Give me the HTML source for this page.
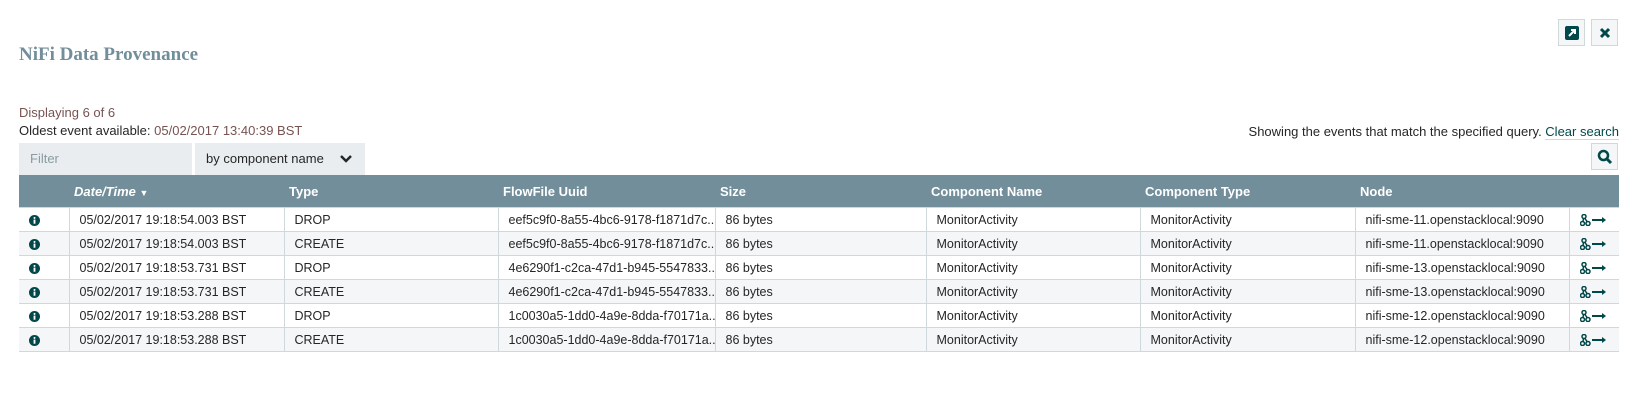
<!DOCTYPE html>
<html><head><style>
body{margin:0;width:1634px;height:401px;background:#fff;font-family:"Liberation Sans",sans-serif;font-size:13px;color:#262626;position:relative;overflow:hidden}
.a{position:absolute}
.btn{position:absolute;width:27px;height:27px;border:1px solid #cfd9dc;background:#f4f6f7;box-sizing:border-box;display:flex;align-items:center;justify-content:center}
table{position:absolute;left:19px;top:175px;width:1600px;border-collapse:collapse;table-layout:fixed}
th{background:#728e9b;color:#fff;font-weight:bold;text-align:left;height:32px;padding:0 0 0 5px;font-size:13px}
td{height:23px;border:1px solid #cfd9dc;padding:0 0 0 10px;white-space:nowrap;overflow:hidden;font-size:12.5px}
td svg{vertical-align:middle}
tr:nth-child(even) td{background:#f4f6f7}
td.i{border-left:none;padding-left:10px}
td.l{border-right:none;padding-left:10px}
</style></head><body>
<div class="a" style="left:19px;top:44px;font-family:'Liberation Serif',serif;font-weight:bold;font-size:19px;color:#728e9b">NiFi Data Provenance</div>
<div class="btn" style="left:1558px;top:19px"><svg width="14" height="14" viewBox="0 0 14 14"><rect x="0" y="0" width="14" height="14" rx="2" fill="#004849"/><path d="M4 10L10 4M6 4h4v4" stroke="#fff" stroke-width="2" fill="none"/></svg></div>
<div class="btn" style="left:1591px;top:19px"><svg width="12" height="12" viewBox="0 0 12 12"><path d="M2 2L10 10M10 2L2 10" stroke="#004849" stroke-width="3"/></svg></div>
<div class="a" style="left:19px;top:105px;color:#775351;font-size:13px">Displaying 6 of 6</div>
<div class="a" style="left:19px;top:123px;font-size:13px">Oldest event available: <span style="color:#775351">05/02/2017 13:40:39 BST</span></div>
<div class="a" style="right:15px;top:124px;font-size:13px">Showing the events that match the specified query. <span style="color:#004849;border-bottom:1px solid #cfd9dc">Clear search</span></div>
<div class="a" style="left:19px;top:143px;width:173px;height:32px;background:#e9edf0;color:#8a9ba3;line-height:32px;padding-left:11px;box-sizing:border-box">Filter</div>
<div class="a" style="left:195px;top:143px;width:170px;height:32px;background:#e9edf0;line-height:32px;padding-left:11px;box-sizing:border-box">by component name<svg class="a" style="left:145px;top:11px" width="12" height="10" viewBox="0 0 12 10"><path d="M1 2L6 7L11 2" stroke="#262626" stroke-width="2.5" fill="none"/></svg></div>
<div class="btn" style="left:1591px;top:143px"><svg width="16" height="16" viewBox="0 0 16 16"><circle cx="6.5" cy="6.5" r="4.5" stroke="#004849" stroke-width="2.5" fill="none"/><path d="M10 10L14 14" stroke="#004849" stroke-width="3"/></svg></div>
<table>
<colgroup><col style="width:50px"><col style="width:215px"><col style="width:214px"><col style="width:217px"><col style="width:211px"><col style="width:214px"><col style="width:215px"><col style="width:214px"><col style="width:50px"></colgroup>
<tr><th></th><th style="padding-left:5px"><i>Date/Time</i> <span style="font-size:9px">&#9660;</span></th><th>Type</th><th>FlowFile Uuid</th><th>Size</th><th>Component Name</th><th>Component Type</th><th>Node</th><th></th></tr>
</table>
<script>
var d=[["05/02/2017 19:18:54.003 BST","DROP","eef5c9f0-8a55-4bc6-9178-f1871d7c...","11"],["05/02/2017 19:18:54.003 BST","CREATE","eef5c9f0-8a55-4bc6-9178-f1871d7c...","11"],["05/02/2017 19:18:53.731 BST","DROP","4e6290f1-c2ca-47d1-b945-5547833...","13"],["05/02/2017 19:18:53.731 BST","CREATE","4e6290f1-c2ca-47d1-b945-5547833...","13"],["05/02/2017 19:18:53.288 BST","DROP","1c0030a5-1dd0-4a9e-8dda-f70171a...","12"],["05/02/2017 19:18:53.288 BST","CREATE","1c0030a5-1dd0-4a9e-8dda-f70171a...","12"]];
var info='<svg width="11" height="11" viewBox="0 0 12 12"><circle cx="6" cy="6" r="6" fill="#004849"/><rect x="5" y="5" width="2" height="4.5" fill="#fff"/><circle cx="6" cy="3.2" r="1.1" fill="#fff"/></svg>';
var lin='<svg width="28" height="12" viewBox="0 0 28 12"><g stroke="#004849" stroke-width="1.5" fill="none"><circle cx="4" cy="2.5" r="2"/><circle cx="2.5" cy="9.5" r="2"/><circle cx="8" cy="9.5" r="2"/><path d="M3.5 4.5L3 7.5M5 4.5L7 7.5"/></g><path d="M12 6h12" stroke="#004849" stroke-width="2"/><path d="M22 3L26 6L22 9z" fill="#004849"/></svg>';
var h='';d.forEach(function(r){h+='<tr><td class="i">'+info+'</td><td>'+r[0]+'</td><td>'+r[1]+'</td><td>'+r[2]+'</td><td>86 bytes</td><td>MonitorActivity</td><td>MonitorActivity</td><td>nifi-sme-'+r[3]+'.openstacklocal:9090</td><td class="l">'+lin+'</td></tr>';});
document.querySelector('table').insertAdjacentHTML('beforeend',h);
</script>
</body></html>
